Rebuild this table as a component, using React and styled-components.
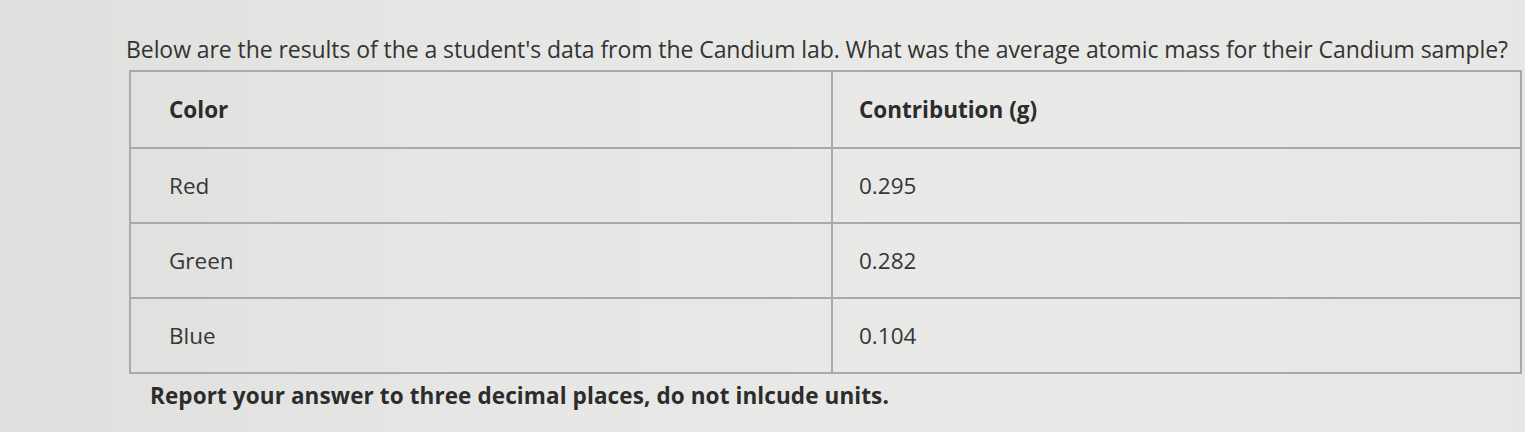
import React from "react";
import styled, { createGlobalStyle } from "styled-components";

const Global = createGlobalStyle`
  html, body { margin: 0; padding: 0; }
  body {
    background: #e5e5e3;
    font-family: "Open Sans", "Noto Sans", sans-serif;
    color: #303030;
  }
`;

const Page = styled.div`
  width: 1525px;
  height: 432px;
  box-sizing: border-box;
  padding: 34px 0 0 126px;
  background: linear-gradient(90deg, #dfdfdd 0%, #e6e6e4 30%, #e9e9e7 65%, #e7e7e5 100%);
  overflow: hidden;
`;

const Question = styled.p`
  margin: 0;
  font-size: 23px;
  line-height: 30px;
  letter-spacing: -0.07px;
  white-space: nowrap;
  color: #333;
`;

const Table = styled.table`
  margin: 6px 0 0 3px;
  width: 1393px;
  border-collapse: collapse;
  table-layout: fixed;
`;

const Cell = styled.td`
  border: 2px solid #a9a9a7;
  height: ${(p) => (p.$head ? 77 : 75)}px;
  padding: 0 0 0 ${(p) => (p.$second ? 26 : 38)}px;
  box-sizing: border-box;
  font-size: 22.5px;
  font-weight: ${(p) => (p.$head ? 700 : 400)};
  color: ${(p) => (p.$head ? "#2c2c2c" : "#363636")};
  vertical-align: middle;
  width: ${(p) => p.$w || "auto"};
  white-space: nowrap;
`;

const Note = styled.p`
  margin: 6px 0 0 24px;
  font-size: 22.5px;
  font-weight: 700;
  letter-spacing: 0.1px;
  color: #2c2c2c;
  white-space: nowrap;
`;

const rows = [
  ["Red", "0.295"],
  ["Green", "0.282"],
  ["Blue", "0.104"],
];

export default function App() {
  return (
    <Page>
      <Global />
      <Question>
        Below are the results of the a student's data from the Candium lab. What was the average atomic mass for their Candium sample?
      </Question>
      <Table>
        <tbody>
          <tr>
            <Cell $head $w="702px">Color</Cell>
            <Cell $head $second>Contribution (g)</Cell>
          </tr>
          {rows.map(([c, v]) => (
            <tr key={c}>
              <Cell>{c}</Cell>
              <Cell $second>{v}</Cell>
            </tr>
          ))}
        </tbody>
      </Table>
      <Note>Report your answer to three decimal places, do not inlcude units.</Note>
    </Page>
  );
}
